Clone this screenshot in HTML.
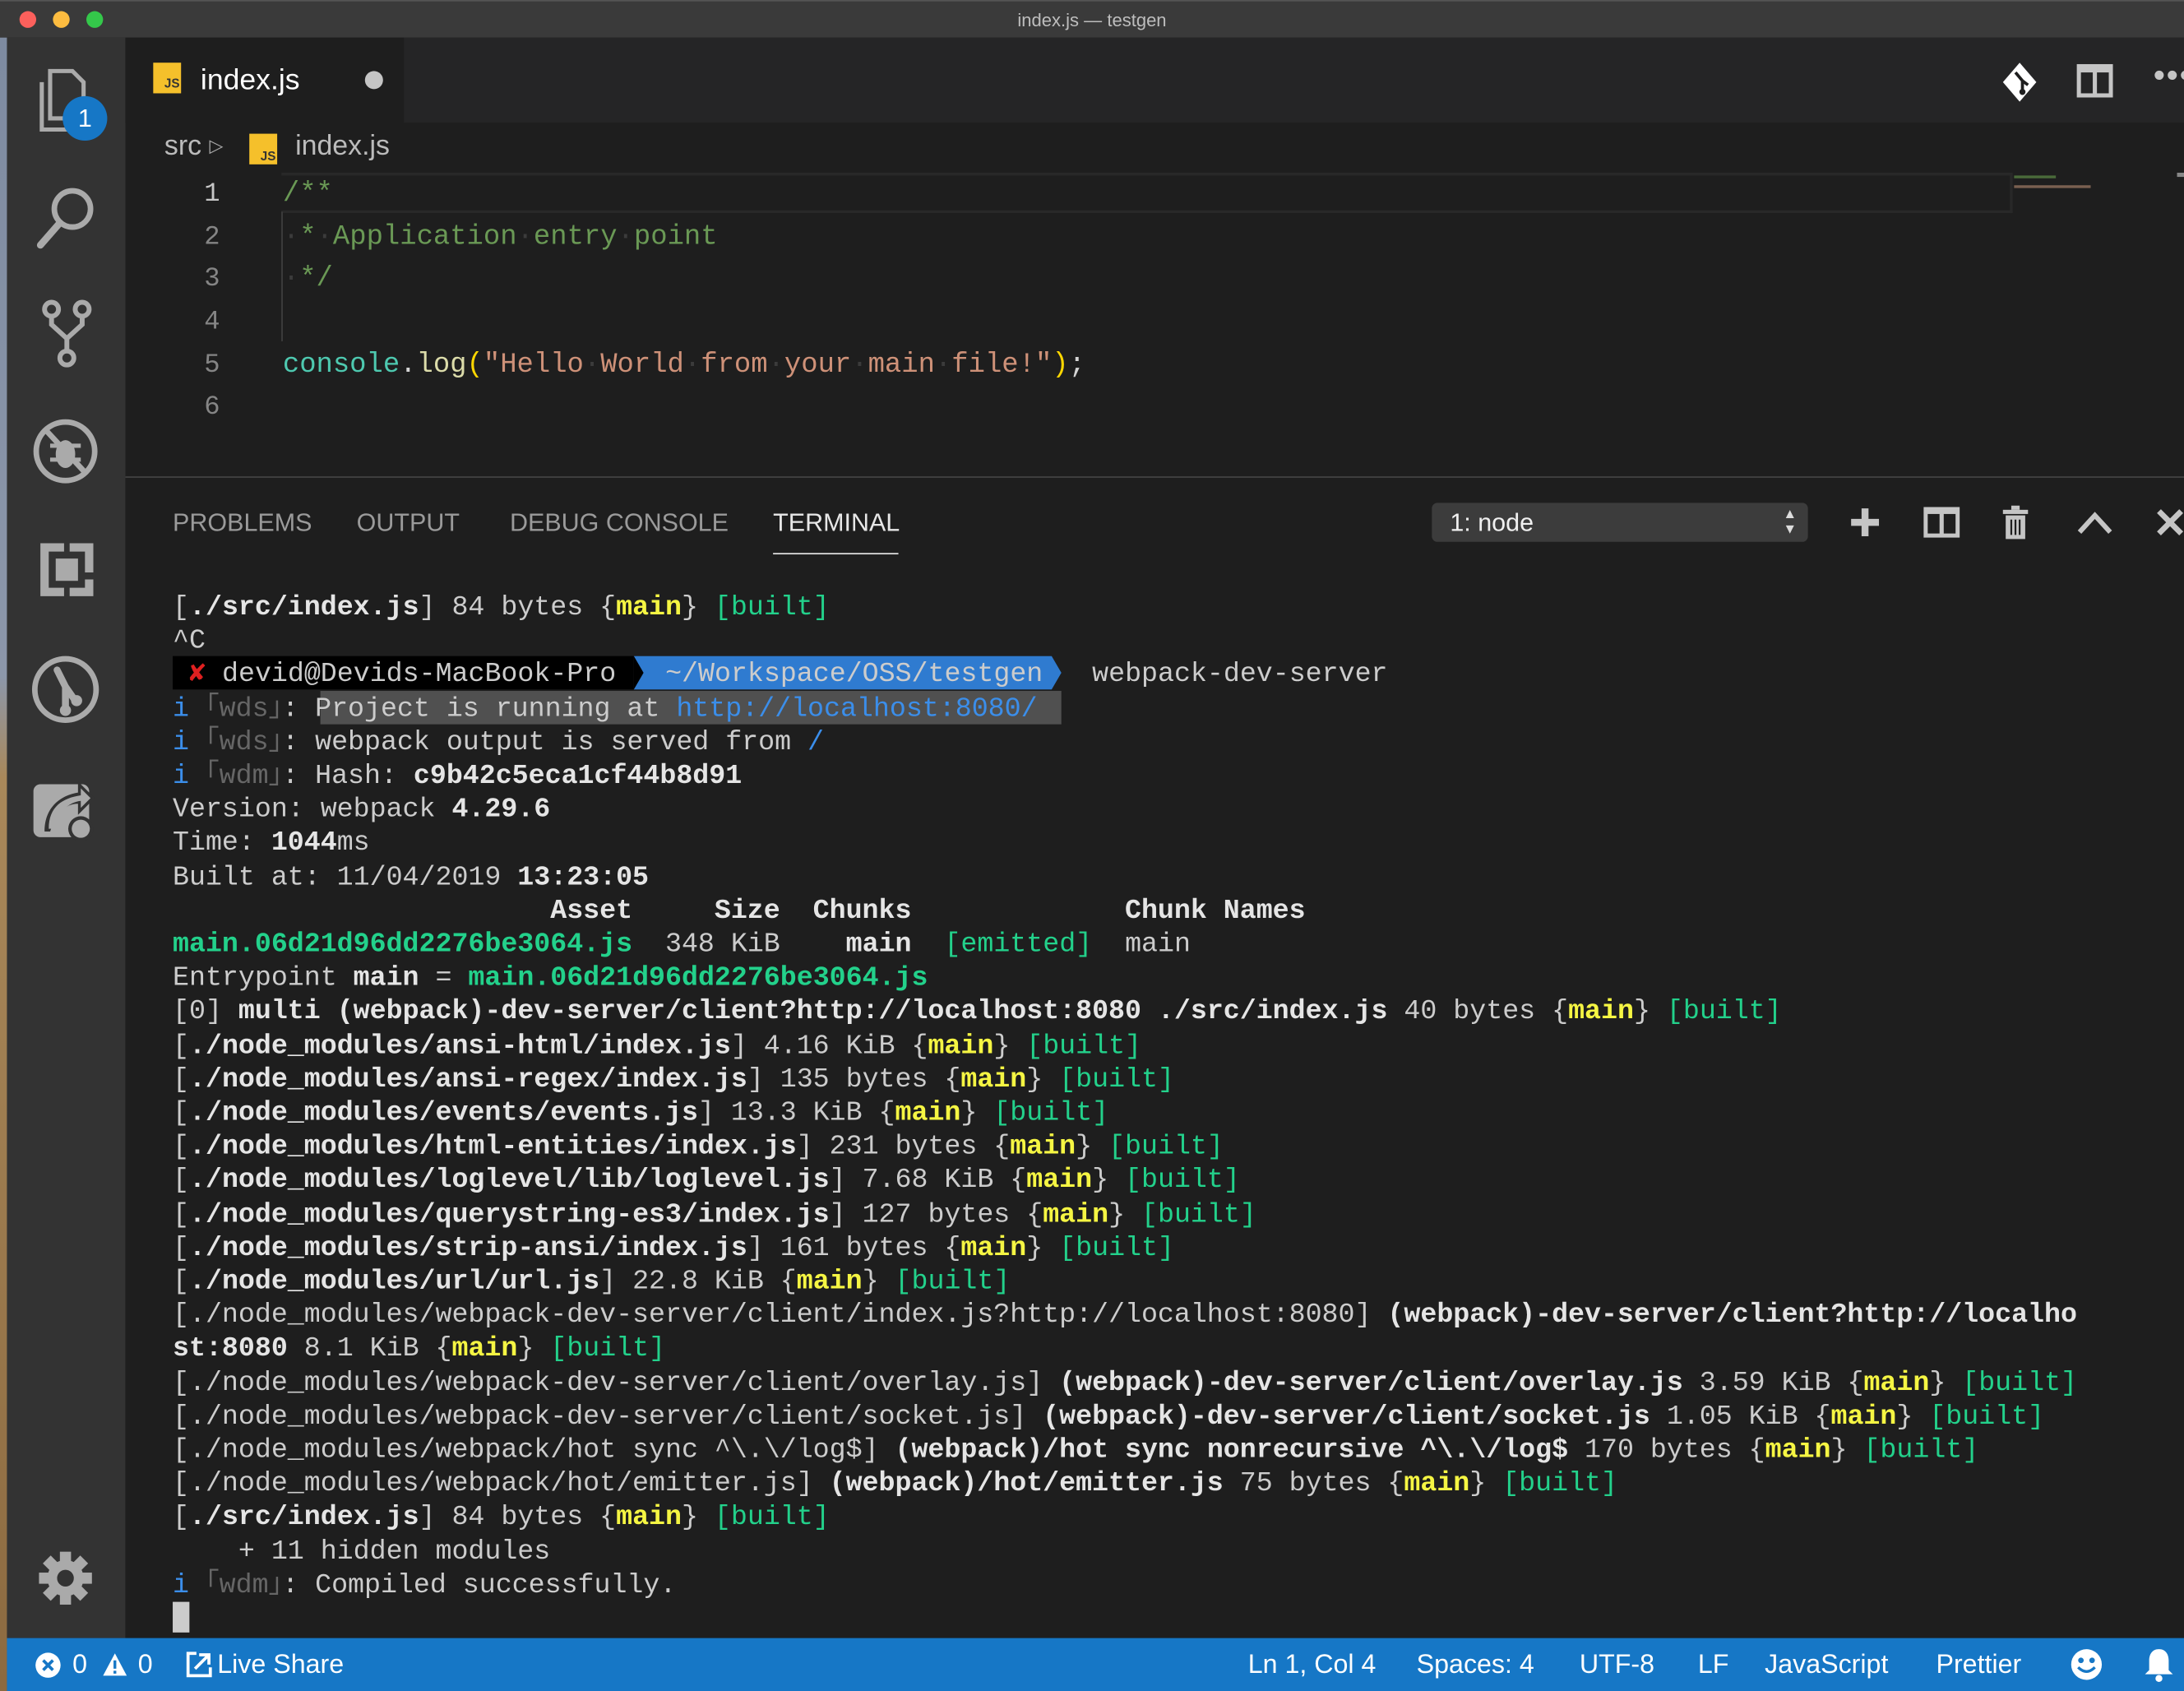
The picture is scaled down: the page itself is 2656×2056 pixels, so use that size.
<!DOCTYPE html>
<html><head><meta charset="utf-8"><style>
*{margin:0;padding:0;box-sizing:border-box}
html,body{width:2656px;height:2056px;overflow:hidden;background:#1e1e1e}
#w{position:absolute;left:0;top:0;width:1568px;height:1214px;transform:scale(1.69388,1.69357);transform-origin:0 0;font-family:"Liberation Sans",sans-serif;background:#1e1e1e;overflow:hidden}
.abs{position:absolute}
#desk{left:0;top:0;width:5px;height:1214px;background:linear-gradient(#7d8aa0 0%,#8c97aa 40%,#a9885a 46%,#8c6a40 100%)}
#title{left:0;top:0;width:1568px;height:27px;background:#3a3a3a;border-top:1px solid #555;color:#bdbdbd;font-size:13px;text-align:center;line-height:28px}
.tl{top:8px;width:12px;height:12px;border-radius:50%}
#act{left:5px;top:27px;width:85px;height:1149px;background:#333}
#tabs{left:90px;top:27px;width:1478px;height:61px;background:#252526}
#tab{left:90px;top:27px;width:200px;height:61px;background:#1e1e1e}
.js{background:#f5c02b;color:#333;font-weight:bold;font-size:9px;text-align:right;line-height:28px;padding-right:1px}
#crumb{left:118px;top:94px;color:#bbb;font-size:20px}
.ln{position:absolute;left:110px;width:48px;text-align:right;font-size:19px;color:#858585;font-family:"Liberation Mono",monospace}
.code{position:absolute;left:203px;font-size:20px;font-family:"Liberation Mono",monospace;white-space:pre;color:#d4d4d4}
.cm{color:#6a9955}.ws{color:#3b3b3b}
#panel{left:90px;top:342px;width:1478px;height:834px;border-top:1px solid #444;background:#1e1e1e}
.pt{position:absolute;top:365px;font-size:18px;color:#9a9a9a}
#term{left:124px;top:424px;font-family:"Liberation Mono",monospace;font-size:19.65px;line-height:24.2px;white-space:pre;color:#cccccc}
.b{font-weight:bold;color:#e5e5e5}
.y{color:#f5f543;font-weight:bold}
.g{color:#23d18b}
.d{color:#666}
.i{color:#3b8eea}
.u{color:#3b8eea}
#status{left:5px;top:1176px;width:1563px;height:38px;background:#1677c6;color:#fff;font-size:19px;line-height:39px}
.st{position:absolute;top:0}
</style></head><body><div id="w">
<div class="abs" id="desk"></div>
<div class="abs" id="title">index.js — testgen</div>
<div class="abs tl" style="left:14px;background:#fc605c"></div>
<div class="abs tl" style="left:38px;background:#fdbc40"></div>
<div class="abs tl" style="left:62px;background:#34c84a"></div>

<div class="abs" id="act"></div>
<svg class="abs" style="left:22px;top:45px" width="50" height="55" viewBox="0 0 50 55"><path d="M14 6h16l8 8v26h-24z" fill="none" stroke="#aaa" stroke-width="3"/><path d="M8 14v34h22" fill="none" stroke="#aaa" stroke-width="3"/></svg>
<div class="abs" style="left:45px;top:69px;width:32px;height:32px;border-radius:50%;background:#1677c6;color:#fff;font-size:18px;text-align:center;line-height:32px">1</div>
<svg class="abs" style="left:22px;top:130px" width="50" height="50" viewBox="0 0 50 50"><circle cx="30" cy="20" r="13" fill="none" stroke="#aaa" stroke-width="4"/><path d="M21 30L7 46" stroke="#aaa" stroke-width="5" stroke-linecap="round"/></svg>
<svg class="abs" style="left:22px;top:212px" width="50" height="55" viewBox="0 0 50 55"><circle cx="15" cy="10" r="5" fill="none" stroke="#aaa" stroke-width="3.5"/><circle cx="37" cy="10" r="5" fill="none" stroke="#aaa" stroke-width="3.5"/><circle cx="26" cy="45" r="5" fill="none" stroke="#aaa" stroke-width="3.5"/><path d="M15 15v6l11 10 11-10v-6M26 31v9" fill="none" stroke="#aaa" stroke-width="3.5"/></svg>
<svg class="abs" style="left:22px;top:298px" width="50" height="52" viewBox="0 0 50 52"><circle cx="25" cy="26" r="21" fill="none" stroke="#aaa" stroke-width="4"/><path d="M12 12l26 28" stroke="#aaa" stroke-width="4"/><ellipse cx="25" cy="28" rx="7" ry="10" fill="#aaa"/><path d="M14 22h8M14 32h8M28 22h8M28 32h8" stroke="#aaa" stroke-width="3"/></svg>
<svg class="abs" style="left:27px;top:388px" width="42" height="42" viewBox="0 0 42 42"><path d="M2 2h17v6h-11v26h11v6h-17z M23 2h17v21h-6v-15h-11z M23 28h17v12h-17v-6h11v-6z" fill="#aaa"/><rect x="13" y="13" width="16" height="16" fill="#aaa"/></svg>
<svg class="abs" style="left:22px;top:470px" width="50" height="50" viewBox="0 0 50 50"><circle cx="25" cy="25" r="22" fill="none" stroke="#aaa" stroke-width="4"/><path d="M19 11l6 12 7 10M25 23v17" stroke="#aaa" stroke-width="5" stroke-linecap="round" fill="none"/><circle cx="33" cy="33" r="4" fill="#aaa"/><circle cx="25" cy="40" r="4" fill="#aaa"/></svg>
<svg class="abs" style="left:22px;top:555px" width="50" height="50" viewBox="0 0 50 50"><rect x="2" y="8" width="40" height="38" rx="5" fill="#aaa"/><path d="M10 42c0-18 12-26 24-28v-8l12 12-12 12v-8c-10 0-16 8-20 20z" fill="#333"/><path d="M13 40c0-16 10-22 23-24v-5l7 7-7 7v-5c-9 1-16 8-20 20z" fill="#aaa"/><circle cx="36" cy="40" r="9" fill="#333"/><circle cx="36" cy="40" r="6.5" fill="#aaa"/></svg>
<svg class="abs" style="left:26px;top:1112px" width="42" height="42" viewBox="0 0 42 42"><g fill="#aaa"><circle cx="21" cy="21" r="13"/><rect x="17" y="2" width="8" height="38"/><rect x="2" y="17" width="38" height="8"/><rect x="17" y="2" width="8" height="38" transform="rotate(45 21 21)"/><rect x="17" y="2" width="8" height="38" transform="rotate(-45 21 21)"/></g><circle cx="21" cy="21" r="6" fill="#333"/></svg>

<div class="abs" id="tabs"></div>
<div class="abs" id="tab"></div>
<div class="abs js" style="left:110px;top:45px;width:20px;height:22px;line-height:30px">JS</div>
<div class="abs" style="left:144px;top:46px;color:#fff;font-size:21px">index.js</div>
<div class="abs" style="left:262px;top:51px;width:13px;height:13px;border-radius:50%;background:#c5c5c5"></div>
<svg class="abs" style="left:1437px;top:44px" width="26" height="30" viewBox="0 0 26 30"><path d="M13 1l12 14-12 14L1 15z" fill="#fff"/><path d="M10 8l5 6v8M15 14l4 3" stroke="#1e1e1e" stroke-width="2.2" fill="none"/><circle cx="15" cy="22" r="2.2" fill="#1e1e1e"/></svg>
<svg class="abs" style="left:1491px;top:46px" width="26" height="24" viewBox="0 0 26 24"><rect x="1.5" y="1.5" width="23" height="21" fill="none" stroke="#c5c5c5" stroke-width="3"/><rect x="1" y="1" width="24" height="5" fill="#c5c5c5"/><path d="M13 2v21" stroke="#c5c5c5" stroke-width="3"/></svg>
<div class="abs" style="left:1546px;top:41px;color:#c5c5c5;font-size:24px;letter-spacing:1px">•••</div>

<div class="abs" id="crumb">src <span style="font-size:13px;color:#aaa;position:relative;top:-2px">&#9655;</span></div>
<div class="abs js" style="left:179px;top:96px;width:20px;height:22px;line-height:32px">JS</div>
<div class="abs" style="left:212px;top:94px;color:#bbb;font-size:20px">index.js</div>

<div class="abs" style="left:202px;top:124px;width:1243px;height:29px;border:2px solid #282828;border-left:none"></div>
<div class="abs" style="left:202px;top:152px;width:1px;height:93px;background:#404040"></div>
<div class="ln" style="top:128px;color:#c6c6c6">1</div>
<div class="ln" style="top:159px">2</div>
<div class="ln" style="top:189px">3</div>
<div class="ln" style="top:220px">4</div>
<div class="ln" style="top:251px">5</div>
<div class="ln" style="top:281px">6</div>
<div class="code cm" style="top:128px">/**</div>
<div class="code cm" style="top:159px"><span class="ws">·</span>*<span class="ws">·</span>Application<span class="ws">·</span>entry<span class="ws">·</span>point</div>
<div class="code cm" style="top:189px"><span class="ws">·</span>*/</div>
<div class="code" style="top:251px"><span style="color:#4ec9b0">console</span>.<span style="color:#dcdcaa">log</span><span style="color:#ffd700">(</span><span style="color:#ce9178">"Hello<span class="ws">·</span>World<span class="ws">·</span>from<span class="ws">·</span>your<span class="ws">·</span>main<span class="ws">·</span>file!"</span><span style="color:#ffd700">)</span>;</div>
<div class="abs" style="left:1446px;top:126px;width:30px;height:2px;background:#4a6a3a"></div>
<div class="abs" style="left:1446px;top:133px;width:55px;height:2px;background:#7a6050"></div>
<div class="abs" style="left:1563px;top:124px;width:5px;height:3px;background:#888"></div>

<div class="abs" id="panel"></div>
<div class="pt" style="left:124px">PROBLEMS</div>
<div class="pt" style="left:256px">OUTPUT</div>
<div class="pt" style="left:366px">DEBUG CONSOLE</div>
<div class="pt" style="left:555px;color:#e7e7e7">TERMINAL</div>
<div class="abs" style="left:555px;top:397px;width:90px;height:1px;background:#e7e7e7"></div>
<div class="abs" style="left:1028px;top:361px;width:270px;height:28px;background:#3c3c3c;border-radius:4px;color:#f0f0f0;font-size:18px;line-height:28px;padding-left:13px">1: node<span style="position:absolute;right:8px;top:0;font-size:10px;line-height:11px;padding-top:3px;color:#ddd">▲<br>▼</span></div>
<svg class="abs" style="left:1328px;top:364px" width="22" height="22" viewBox="0 0 22 22"><path d="M11 1v20M1 11h20" stroke="#c5c5c5" stroke-width="5"/></svg>
<svg class="abs" style="left:1381px;top:364px" width="26" height="22" viewBox="0 0 26 22"><rect x="1.5" y="1.5" width="23" height="19" fill="none" stroke="#c5c5c5" stroke-width="3"/><rect x="1" y="1" width="24" height="4" fill="#c5c5c5"/><path d="M13 2v19" stroke="#c5c5c5" stroke-width="3"/></svg>
<svg class="abs" style="left:1437px;top:362px" width="20" height="26" viewBox="0 0 20 26"><rect x="1" y="4" width="18" height="3" fill="#c5c5c5"/><rect x="7" y="1" width="6" height="3" fill="#c5c5c5"/><path d="M3 8h14v17H3z" fill="#c5c5c5"/><path d="M7 11v11M10 11v11M13 11v11" stroke="#1e1e1e" stroke-width="1.3"/></svg>
<svg class="abs" style="left:1491px;top:366px" width="26" height="18" viewBox="0 0 26 18"><path d="M2 16L13 4l11 12" fill="none" stroke="#c5c5c5" stroke-width="3.5"/></svg>
<svg class="abs" style="left:1548px;top:365px" width="20" height="20" viewBox="0 0 20 20"><path d="M2 2l16 16M18 2L2 18" stroke="#c5c5c5" stroke-width="4"/></svg>

<div class="abs" style="left:124px;top:471px;width:331px;height:24px;background:#000"></div>
<svg class="abs" style="left:455px;top:471px" width="320" height="24" viewBox="0 0 320 24"><path d="M0 0h300l7 12-7 12H0l7-12z" fill="#2f7bd0"/><path d="M0 0l7 12-7 12z" fill="#000"/></svg>
<div class="abs" style="left:230px;top:496px;width:532px;height:24px;background:#505050"></div>
<div class="abs" id="term">[<span class="b">./src/index.js</span>] 84 bytes {<span class="y">main</span>} <span class="g">[built]</span>
^C
 <span style="color:#e02020">✘</span> devid@Devids-MacBook-Pro   ~/Workspace/OSS/testgen   webpack-dev-server
<span class="i">i</span> <span class="d">｢wds｣</span>: Project is running at <span class="u">http://localhost:8080/</span>
<span class="i">i</span> <span class="d">｢wds｣</span>: webpack output is served from <span class="u">/</span>
<span class="i">i</span> <span class="d">｢wdm｣</span>: Hash: <span class="b">c9b42c5eca1cf44b8d91</span>
Version: webpack <span class="b">4.29.6</span>
Time: <span class="b">1044</span>ms
Built at: 11/04/2019 <span class="b">13:23:05</span>
<span class="b">                       Asset     Size  Chunks             Chunk Names</span>
<span class="g b" style="color:#23d18b">main.06d21d96dd2276be3064.js</span>  348 KiB    <span class="b">main</span>  <span class="g">[emitted]</span>  main
Entrypoint <span class="b">main</span> = <span class="g b" style="color:#23d18b">main.06d21d96dd2276be3064.js</span>
[0] <span class="b">multi (webpack)-dev-server/client?http://localhost:8080 ./src/index.js</span> 40 bytes {<span class="y">main</span>} <span class="g">[built]</span>
[<span class="b">./node_modules/ansi-html/index.js</span>] 4.16 KiB {<span class="y">main</span>} <span class="g">[built]</span>
[<span class="b">./node_modules/ansi-regex/index.js</span>] 135 bytes {<span class="y">main</span>} <span class="g">[built]</span>
[<span class="b">./node_modules/events/events.js</span>] 13.3 KiB {<span class="y">main</span>} <span class="g">[built]</span>
[<span class="b">./node_modules/html-entities/index.js</span>] 231 bytes {<span class="y">main</span>} <span class="g">[built]</span>
[<span class="b">./node_modules/loglevel/lib/loglevel.js</span>] 7.68 KiB {<span class="y">main</span>} <span class="g">[built]</span>
[<span class="b">./node_modules/querystring-es3/index.js</span>] 127 bytes {<span class="y">main</span>} <span class="g">[built]</span>
[<span class="b">./node_modules/strip-ansi/index.js</span>] 161 bytes {<span class="y">main</span>} <span class="g">[built]</span>
[<span class="b">./node_modules/url/url.js</span>] 22.8 KiB {<span class="y">main</span>} <span class="g">[built]</span>
[./node_modules/webpack-dev-server/client/index.js?http://localhost:8080] <span class="b">(webpack)-dev-server/client?http://localho</span>
<span class="b">st:8080</span> 8.1 KiB {<span class="y">main</span>} <span class="g">[built]</span>
[./node_modules/webpack-dev-server/client/overlay.js] <span class="b">(webpack)-dev-server/client/overlay.js</span> 3.59 KiB {<span class="y">main</span>} <span class="g">[built]</span>
[./node_modules/webpack-dev-server/client/socket.js] <span class="b">(webpack)-dev-server/client/socket.js</span> 1.05 KiB {<span class="y">main</span>} <span class="g">[built]</span>
[./node_modules/webpack/hot sync ^\.\/log$] <span class="b">(webpack)/hot sync nonrecursive ^\.\/log$</span> 170 bytes {<span class="y">main</span>} <span class="g">[built]</span>
[./node_modules/webpack/hot/emitter.js] <span class="b">(webpack)/hot/emitter.js</span> 75 bytes {<span class="y">main</span>} <span class="g">[built]</span>
[<span class="b">./src/index.js</span>] 84 bytes {<span class="y">main</span>} <span class="g">[built]</span>
    + 11 hidden modules
<span class="i">i</span> <span class="d">｢wdm｣</span>: Compiled successfully.</div>
<div class="abs" style="left:124px;top:1150px;width:12px;height:22px;background:#ccc"></div>

<div class="abs" id="status">
<svg class="st" style="left:20px;top:10px" width="19" height="19" viewBox="0 0 19 19"><circle cx="9.5" cy="9.5" r="9" fill="#fff"/><path d="M6 6l7 7M13 6l-7 7" stroke="#1677c6" stroke-width="2.2"/></svg>
<span class="st" style="left:47px">0</span>
<svg class="st" style="left:68px;top:10px" width="19" height="18" viewBox="0 0 19 18"><path d="M9.5 1L18 17H1z" fill="#fff"/><path d="M9.5 6v6M9.5 13.5v2" stroke="#1677c6" stroke-width="2"/></svg>
<span class="st" style="left:94px">0</span>
<svg class="st" style="left:128px;top:9px" width="20" height="20" viewBox="0 0 20 20"><path d="M8 2H2v16h16v-6" fill="none" stroke="#fff" stroke-width="2.2"/><path d="M7 13l9-9M10 3h7v7" fill="none" stroke="#fff" stroke-width="2.2"/></svg>
<span class="st" style="left:151px">Live Share</span>
<span class="st" style="left:891px">Ln 1, Col 4</span>
<span class="st" style="left:1012px">Spaces: 4</span>
<span class="st" style="left:1129px">UTF-8</span>
<span class="st" style="left:1214px">LF</span>
<span class="st" style="left:1262px">JavaScript</span>
<span class="st" style="left:1385px">Prettier</span>
<svg class="st" style="left:1481px;top:7px" width="24" height="24" viewBox="0 0 24 24"><circle cx="12" cy="12" r="11" fill="#fff"/><circle cx="8" cy="9" r="2" fill="#1677c6"/><circle cx="16" cy="9" r="2" fill="#1677c6"/><path d="M6 14q6 6 12 0" fill="none" stroke="#1677c6" stroke-width="2"/></svg>
<svg class="st" style="left:1534px;top:6px" width="22" height="26" viewBox="0 0 22 26"><path d="M11 2c-5 0-7 4-7 8v7l-3 3h20l-3-3v-7c0-4-2-8-7-8z" fill="#fff"/><circle cx="11" cy="23" r="2.5" fill="#fff"/></svg>
</div>
</div></body></html>
